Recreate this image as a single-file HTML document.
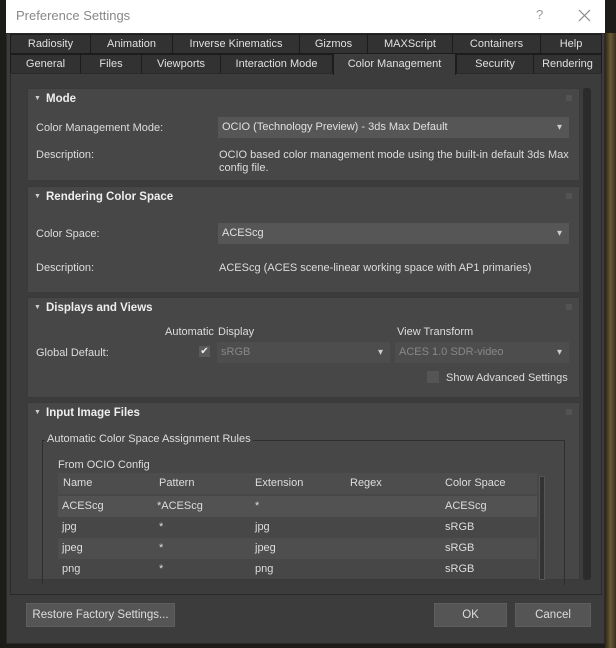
<!DOCTYPE html><html><head><style>
*{box-sizing:border-box;margin:0;padding:0}
body{width:616px;height:648px;background:#1e1c18;font-family:"Liberation Sans",sans-serif;font-size:11px;color:#ddd;position:relative;overflow:hidden}
.a{position:absolute;white-space:nowrap}
.tab{position:absolute;height:20px;background:#323232;border:1px solid #1c1c1c;text-align:center;line-height:18px;color:#e0e0e0}
.panel{position:absolute;left:27px;width:553px;background:#474747;border:1px solid #3a3a3a}
.hd{position:absolute;left:18px;top:4px;font-weight:bold;font-size:11.5px;color:#eee}
.tri{position:absolute;left:6px;top:6px;font-size:7px;color:#ccc}
.grip{position:absolute;right:7px;top:6px;width:6px;height:6px;background-image:radial-gradient(#777 40%,transparent 45%);background-size:2px 2px}
.dd{position:absolute;background:#565656;height:21px;line-height:21px;padding-left:4px;color:#e0e0e0}
.dd:after{content:"▾";position:absolute;right:7px;top:0;font-size:10px;color:#ccc}
.dis{background:#4d4d4d;color:#888}
.btn{position:absolute;top:603px;height:24px;background:#555;border:1px solid #5e5e5e;text-align:center;line-height:22px;color:#ddd;font-size:11.5px}
.row{position:absolute;left:58px;width:479px;height:21px;line-height:21px}
.row span{position:absolute}
</style></head><body>
<div class="a" style="left:605px;top:33px;width:11px;height:615px;background:linear-gradient(90deg,#2a2418,#6b5a34,#3a3020)"></div>
<div class="a" style="left:6px;top:0;width:599px;height:33px;background:#fff"></div>
<div class="a" style="left:16px;top:8px;font-size:13px;color:#888">Preference Settings</div>
<div class="a" style="left:536px;top:7px;font-size:13px;color:#999">?</div>
<svg class="a" style="left:578px;top:9px" width="13" height="13"><path d="M1 1L12 12M12 1L1 12" stroke="#888" stroke-width="1.2"/></svg>
<div class="a" style="left:6px;top:33px;width:599px;height:611px;background:#3c3c3c;border:1px solid #2a2a2a"></div>
<div class="tab" style="left:10px;top:34px;width:81px">Radiosity</div>
<div class="tab" style="left:90px;top:34px;width:83px">Animation</div>
<div class="tab" style="left:172px;top:34px;width:128px">Inverse Kinematics</div>
<div class="tab" style="left:299px;top:34px;width:69px">Gizmos</div>
<div class="tab" style="left:367px;top:34px;width:86px">MAXScript</div>
<div class="tab" style="left:452px;top:34px;width:89px">Containers</div>
<div class="tab" style="left:540px;top:34px;width:62px">Help</div>
<div class="tab" style="left:10px;top:54px;width:71px">General</div>
<div class="tab" style="left:80px;top:54px;width:62px">Files</div>
<div class="tab" style="left:141px;top:54px;width:80px">Viewports</div>
<div class="tab" style="left:220px;top:54px;width:113px">Interaction Mode</div>
<div class="tab" style="left:456px;top:54px;width:78px">Security</div>
<div class="tab" style="left:533px;top:54px;width:69px">Rendering</div>
<div class="a" style="left:10px;top:73px;width:592px;height:522px;background:#3c3c3c;border:1px solid #2a2a2a"></div>
<div class="tab" style="left:333px;top:53px;width:123px;height:22px;background:#3c3c3c;border-bottom:none;line-height:20px">Color Management</div>
<div class="a" style="left:583px;top:88px;width:8px;height:492px;background:#2b2b2b;border-radius:3px"></div>

<div class="panel" style="top:88px;height:93px"><span class="tri">▼</span><span class="hd">Mode</span><span class="grip"></span></div>
<div class="a" style="left:36px;top:122px">Color Management Mode:</div>
<div class="dd" style="left:218px;top:117px;width:351px">OCIO (Technology Preview) - 3ds Max Default</div>
<div class="a" style="left:36px;top:149px">Description:</div>
<div class="a" style="left:219px;top:149px;line-height:13px">OCIO based color management mode using the built-in default 3ds Max<br>config file.</div>

<div class="panel" style="top:186px;height:107px"><span class="tri">▼</span><span class="hd">Rendering Color Space</span><span class="grip"></span></div>
<div class="a" style="left:36px;top:228px">Color Space:</div>
<div class="dd" style="left:218px;top:223px;width:351px">ACEScg</div>
<div class="a" style="left:36px;top:262px">Description:</div>
<div class="a" style="left:219px;top:262px">ACEScg (ACES scene-linear working space with AP1 primaries)</div>

<div class="panel" style="top:297px;height:101px"><span class="tri">▼</span><span class="hd">Displays and Views</span><span class="grip"></span></div>
<div class="a" style="left:165px;top:326px">Automatic</div>
<div class="a" style="left:218px;top:326px">Display</div>
<div class="a" style="left:397px;top:326px">View Transform</div>
<div class="a" style="left:36px;top:347px">Global Default:</div>
<div class="a" style="left:199px;top:346px;width:11px;height:11px;background:#5a5a5a;font-size:10px;line-height:11px;text-align:center;color:#eee">✔</div>
<div class="dd dis" style="left:217px;top:342px;width:173px">sRGB</div>
<div class="dd dis" style="left:395px;top:342px;width:174px">ACES 1.0 SDR-video</div>
<div class="a" style="left:427px;top:371px;width:12px;height:12px;background:#555"></div>
<div class="a" style="left:446px;top:372px">Show Advanced Settings</div>

<div class="panel" style="top:402px;height:178px"><span class="tri">▼</span><span class="hd">Input Image Files</span><span class="grip"></span></div>
<div class="a" style="left:42px;top:440px;width:523px;height:145px;border:1px solid #2e2e2e;border-bottom:none"></div>
<div class="a" style="left:45px;top:433px;background:#474747;padding:0 2px">Automatic Color Space Assignment Rules</div>
<div class="a" style="left:58px;top:459px">From OCIO Config</div>
<div class="row" style="top:473px;background:#4d4d4d"><span style="left:5px">Name</span><span style="left:101px">Pattern</span><span style="left:197px">Extension</span><span style="left:292px">Regex</span><span style="left:387px">Color Space</span></div>
<div class="row" style="top:496px;background:#525252"><span style="left:4px">ACEScg</span><span style="left:99px">*ACEScg</span><span style="left:197px">*</span><span style="left:387px">ACEScg</span></div>
<div class="row" style="top:517px"><span style="left:4px">jpg</span><span style="left:101px">*</span><span style="left:197px">jpg</span><span style="left:387px">sRGB</span></div>
<div class="row" style="top:538px;background:#4e4e4e"><span style="left:4px">jpeg</span><span style="left:101px">*</span><span style="left:197px">jpeg</span><span style="left:387px">sRGB</span></div>
<div class="row" style="top:559px"><span style="left:4px">png</span><span style="left:101px">*</span><span style="left:197px">png</span><span style="left:387px">sRGB</span></div>
<div class="a" style="left:539px;top:476px;width:6px;height:104px;background:#333;border:1px solid #555"></div>

<div class="btn" style="left:26px;width:149px">Restore Factory Settings...</div>
<div class="btn" style="left:434px;width:73px">OK</div>
<div class="btn" style="left:515px;width:76px">Cancel</div>
</body></html>
